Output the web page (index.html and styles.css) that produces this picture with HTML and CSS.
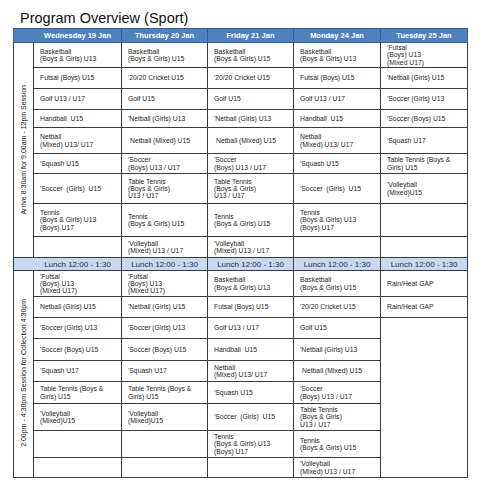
FILE: index.html
```html
<!DOCTYPE html>
<html>
<head>
<meta charset="utf-8">
<link rel="stylesheet" href="styles.css">
</head>
<body>
<h1 class="title">Program Overview (Sport)</h1>
<table class="prog">
<colgroup>
<col class="c-label"><col class="c-wed"><col class="c-day"><col class="c-day"><col class="c-day5"><col class="c-day5">
</colgroup>
<thead>
<tr class="head">
<th colspan="2" class="first">Wednesday 19 Jan</th>
<th>Thursday 20 Jan</th>
<th>Friday 21 Jan</th>
<th>Monday 24 Jan</th>
<th>Tuesday 25 Jan</th>
</tr>
</thead>
<tbody>
<tr class="h25">
<td rowspan="9" class="label"><span>Arrive 8:30am for 9:00am - 12pm Session</span></td>
<td>Basketball<br>(Boys &amp; Girls) U13</td>
<td>Basketball<br>(Boys &amp; Girls) U15</td>
<td>Basketball<br>(Boys &amp; Girls) U15</td>
<td>Basketball<br>(Boys &amp; Girls) U13</td>
<td>'Futsal<br>(Boys) U13<br>(Mixed U17)</td>
</tr>
<tr class="h21">
<td>Futsal (Boys) U15</td>
<td>'20/20 Cricket U15</td>
<td>'20/20 Cricket U15</td>
<td>Futsal (Boys) U15</td>
<td>'Netball (Girls) U15</td>
</tr>
<tr class="h21">
<td>Golf U13 / U17</td>
<td>Golf U15</td>
<td>Golf U15</td>
<td>Golf U13 / U17</td>
<td>'Soccer (Girls) U13</td>
</tr>
<tr class="h18">
<td>Handball&nbsp; U15</td>
<td>'Netball (Girls) U13</td>
<td>'Netball (Girls) U13</td>
<td>Handball&nbsp; U15</td>
<td>'Soccer (Boys) U15</td>
</tr>
<tr class="h26">
<td>Netball<br>(Mixed) U13/ U17</td>
<td class="ind">Netball (Mixed) U15</td>
<td class="ind">Netball (Mixed) U15</td>
<td>Netball<br>(Mixed) U13/ U17</td>
<td>'Squash U17</td>
</tr>
<tr class="h20">
<td>'Squash U15</td>
<td>'Soccer<br>(Boys) U13 / U17</td>
<td>'Soccer<br>(Boys) U13 / U17</td>
<td>'Squash U15</td>
<td>Table Tennis (Boys &amp;<br>Girls) U15</td>
</tr>
<tr class="h30">
<td>'Soccer&nbsp; (Girls)&nbsp; U15</td>
<td>Table Tennis<br>(Boys &amp; Girls)<br>U13 / U17</td>
<td>Table Tennis<br>(Boys &amp; Girls)<br>U13 / U17</td>
<td>'Soccer&nbsp; (Girls)&nbsp; U15</td>
<td>'Volleyball<br>(Mixed)U15</td>
</tr>
<tr class="h33">
<td>Tennis<br>(Boys &amp; Girls) U13<br>(Boys) U17</td>
<td>Tennis<br>(Boys &amp; Girls) U15</td>
<td>Tennis<br>(Boys &amp; Girls) U15</td>
<td>Tennis<br>(Boys &amp; Girls) U13<br>(Boys) U17</td>
<td></td>
</tr>
<tr class="h21">
<td></td>
<td>'Volleyball<br>(Mixed) U13 / U17</td>
<td>'Volleyball<br>(Mixed) U13 / U17</td>
<td></td>
<td></td>
</tr>
</tbody>
<tbody>
<tr class="lunch">
<td colspan="2" class="first">Lunch 12:00 - 1:30</td>
<td>Lunch 12:00 - 1:30</td>
<td>Lunch 12:00 - 1:30</td>
<td>Lunch 12:00 - 1:30</td>
<td>Lunch 12:00 - 1:30</td>
</tr>
</tbody>
<tbody>
<tr class="h26">
<td rowspan="9" class="label"><span>2.00pm - 4:30pm Session for Collection 4:30pm</span></td>
<td>'Futsal<br>(Boys) U13<br>(Mixed U17)</td>
<td>'Futsal<br>(Boys) U13<br>(Mixed U17)</td>
<td>Basketball<br>(Boys &amp; Girls) U13</td>
<td>Basketball<br>(Boys &amp; Girls) U15</td>
<td>Rain/Heat GAP</td>
</tr>
<tr class="h21">
<td>Netball (Girls) U15</td>
<td>'Netball (Girls) U15</td>
<td>Futsal (Boys) U15</td>
<td>'20/20 Cricket U15</td>
<td>Rain/Heat GAP</td>
</tr>
<tr class="h21">
<td>'Soccer (Girls) U13</td>
<td>'Soccer (Girls) U13</td>
<td>Golf U13 / U17</td>
<td>Golf U15</td>
<td rowspan="7"></td>
</tr>
<tr class="h22">
<td>'Soccer (Boys) U15</td>
<td>'Soccer (Boys) U15</td>
<td>Handball&nbsp; U15</td>
<td>'Netball (Girls) U13</td>
</tr>
<tr class="h21">
<td>'Squash U17</td>
<td>'Squash U17</td>
<td>Netball<br>(Mixed) U13/ U17</td>
<td class="ind">Netball (Mixed) U15</td>
</tr>
<tr class="h22">
<td>Table Tennis (Boys &amp;<br>Girls) U15</td>
<td>Table Tennis (Boys &amp;<br>Girls) U15</td>
<td>'Squash U15</td>
<td>'Soccer<br>(Boys) U13 / U17</td>
</tr>
<tr class="h27">
<td>'Volleyball<br>(Mixed)U15</td>
<td>'Volleyball<br>(Mixed)U15</td>
<td>'Soccer&nbsp; (Girls)&nbsp; U15</td>
<td>Table Tennis<br>(Boys &amp; Girls)<br>U13 / U17</td>
</tr>
<tr class="h27">
<td></td>
<td></td>
<td>Tennis<br>(Boys &amp; Girls) U13<br>(Boys) U17</td>
<td>Tennis<br>(Boys &amp; Girls) U15</td>
</tr>
<tr class="h20">
<td></td>
<td></td>
<td></td>
<td>'Volleyball<br>(Mixed) U13 / U17</td>
</tr>
</tbody>
</table>
</body>
</html>
```
FILE: styles.css
```css
html, body {
  margin: 0;
  padding: 0;
  background: #ffffff;
}
body {
  font-family: "Liberation Sans", Arial, sans-serif;
  color: #262626;
}
.title {
  margin: 0;
  padding: 9px 0 0 20px;
  height: 19px;
  font-size: 14.5px;
  font-weight: normal;
  line-height: 19px;
  color: #111111;
}
.prog {
  margin: 0 0 0 13px;
  border-collapse: collapse;
  table-layout: fixed;
  width: 454px;
}
.c-label { width: 20px; }
.c-wed { width: 88px; }
.c-day { width: 86px; }
.c-day5 { width: 87px; }
.prog td {
  border: 1px solid #3a3a3a;
  padding: 0 4px 0 6px;
  font-size: 6.8px;
  line-height: 7.3px;
  vertical-align: middle;
  color: #262626;
  white-space: nowrap;
  overflow: hidden;
}
.prog td.ind { padding-left: 8px; }
.head th {
  height: 13px;
  padding: 0;
  background: #4f81bd;
  border: 1px solid #37608f;
  color: #ffffff;
  font-size: 7.5px;
  font-weight: bold;
  text-align: center;
  vertical-align: middle;
  line-height: 9px;
}
.head th.first { padding-left: 20px; }
.lunch td {
  height: 12px;
  padding: 0;
  background: #c6d9f1;
  text-align: center;
  font-size: 8px;
  line-height: 9px;
  color: #1f2d44;
}
.lunch td.first { padding-left: 20px; }
.prog td.label {
  padding: 0;
  text-align: center;
  vertical-align: middle;
}
.label span {
  display: inline-block;
  writing-mode: vertical-rl;
  transform: rotate(180deg);
  font-size: 7px;
  line-height: 8px;
  color: #111111;
}
.h18 { height: 18px; }
.h20 { height: 20px; }
.h21 { height: 21px; }
.h22 { height: 22px; }
.h25 { height: 25px; }
.h26 { height: 26px; }
.h27 { height: 27px; }
.h30 { height: 30px; }
.h33 { height: 33px; }
```
